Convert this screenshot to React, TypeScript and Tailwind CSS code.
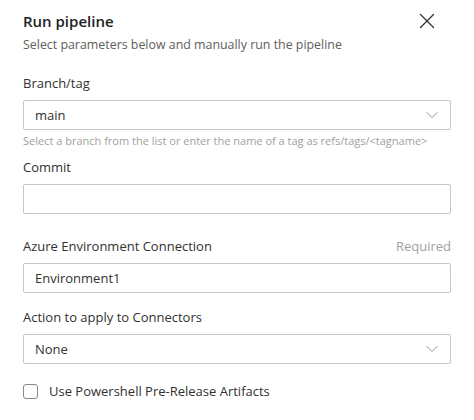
import { ChevronDown, X } from "lucide-react";

function Label({ text, hint }: { text: string; hint?: string }) {
    return (
        <div className="flex items-center justify-between h-5 leading-5 text-[13px] text-[#323130]">
            <span>{text}</span>
            {hint && <span className="text-[#a19f9d]">{hint}</span>}
        </div>
    );
}

function Field({ value, dropdown }: { value?: string; dropdown?: boolean }) {
    return (
        <div className="flex items-center justify-between h-[30px] mt-[7px] pl-[11px] pr-[8px] border border-[#c8c6c4] rounded-[2px] text-[13px] leading-5 text-[#323130]">
            <span>{value}</span>
            {dropdown && <ChevronDown className="w-5 h-5 text-[#8a8886]" strokeWidth={1.1} />}
        </div>
    );
}

export default function App() {
    return (
        <div
            className="w-[474px] h-[420px] bg-white px-[23px] pt-[9px] overflow-hidden"
            style={{ fontFamily: '"Open Sans", "Noto Sans", sans-serif' }}
        >
            <div className="flex items-center justify-between h-6">
                <h1 className="text-[15px] leading-6 font-semibold text-[#201f1e]">Run pipeline</h1>
                <X className="w-[26px] h-[26px] mr-[11px] text-[#323130]" strokeWidth={1.2} />
            </div>
            <p className="mt-[3px] text-[12.4px] leading-[18px] text-[#605e5c]">
                Select parameters below and manually run the pipeline
            </p>

            <div className="mt-[19px]">
                <Label text="Branch/tag" />
                <Field value="main" dropdown />
                <p className="mt-[4px] text-[11px] leading-[14px] text-[#a19f9d]">
                    Select a branch from the list or enter the name of a tag as refs/tags/&lt;tagname&gt;
                </p>
            </div>

            <div className="mt-[9px]">
                <Label text="Commit" />
                <Field />
            </div>

            <div className="mt-[22px]">
                <Label text="Azure Environment Connection" hint="Required" />
                <Field value="Environment1" />
            </div>

            <div className="mt-[14px]">
                <Label text="Action to apply to Connectors" />
                <Field value="None" dropdown />
            </div>

            <label className="flex items-center gap-[11px] h-5 mt-[17px] text-[13px] leading-5 text-[#323130]">
                <span className="w-[15px] h-[15px] border border-[#8a8886] rounded-[3px]" />
                Use Powershell Pre-Release Artifacts
            </label>
        </div>
    );
}
